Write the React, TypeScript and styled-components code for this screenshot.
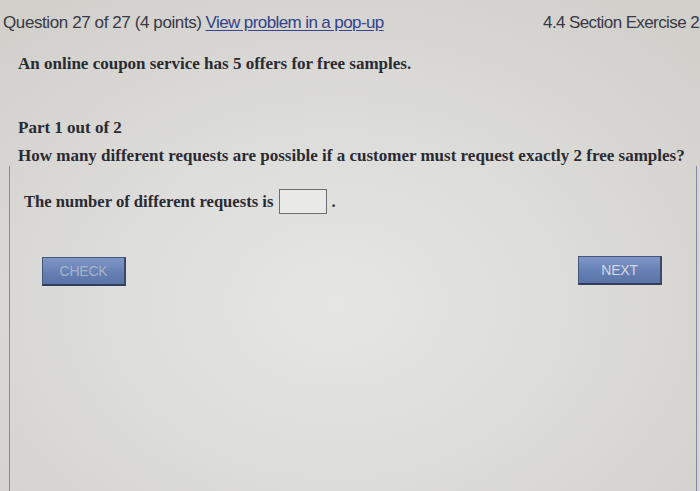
import React from "react";
import styled, { createGlobalStyle } from "styled-components";

const Global = createGlobalStyle`
  html, body { margin: 0; padding: 0; }
  body {
    width: 700px;
    height: 491px;
    overflow: hidden;
    background: radial-gradient(ellipse 70% 75% at 48% 62%, #e6e7e4 0%, #dddddb 45%, #d2d0cb 100%);
  }
`;

const Page = styled.div`
  width: 700px;
  height: 491px;
  overflow: hidden;
  display: flex;
  flex-direction: column;
`;

const Header = styled.div`
  display: flex;
  justify-content: space-between;
  align-items: baseline;
  padding: 13px 0 0 3px;
  font-family: "Liberation Sans", Arial, sans-serif;
  font-size: 17px;
  color: #383846;
  white-space: nowrap;
  letter-spacing: -0.4px;
`;

const Left = styled.div``;

const Link = styled.a`
  color: #34438a;
  text-decoration: underline;
  text-underline-offset: 2px;
  margin-left: 4px;
  letter-spacing: -0.6px;
`;

const Right = styled.div`
  margin-right: 1px;
  letter-spacing: -0.6px;
`;

const Serif = styled.div<{ $top?: number }>`
  font-family: "Liberation Serif", "Times New Roman", serif;
  font-weight: bold;
  font-size: 17px;
  color: #2a2a32;
  padding-left: 18px;
  margin-top: ${(p) => p.$top ?? 0}px;
  white-space: nowrap;
`;

const Frame = styled.div`
  flex: 1;
  display: flex;
  flex-direction: column;
  margin: 0 3px 0 9px;
  padding-top: 23px;
  border-left: 1px solid #7f8aa6;
  border-right: 1px solid #7f8aa6;
`;

const AnswerRow = styled.div`
  display: flex;
  align-items: center;
  font-family: "Liberation Serif", "Times New Roman", serif;
  font-weight: bold;
  font-size: 16.6px;
  color: #2a2a32;
  padding-left: 14px;
  gap: 6px;
`;

const Box = styled.span`
  display: inline-block;
  width: 46px;
  height: 23px;
  border: 1px solid #6e6e72;
  background: #e9e9e7;
`;

const Dot = styled.span`
  margin-left: -2px;
`;

const ButtonRow = styled.div`
  display: flex;
  justify-content: space-between;
  align-items: flex-start;
  padding: 42px 34px 0 32px;
`;

const Btn = styled.div<{ $dim?: boolean; $shift?: number }>`
  width: 84px;
  height: 29px;
  margin-top: ${(p) => p.$shift ?? 0}px;
  box-sizing: border-box;
  display: flex;
  align-items: center;
  justify-content: center;
  background: linear-gradient(#7f97c6, #6580b4 55%, #5b74a8);
  border: 1px solid #46557e;
  border-bottom: 2px solid #333d5c;
  border-right: 2px solid #3d4868;
  font-family: "Liberation Sans", Arial, sans-serif;
  font-size: 14px;
  color: ${(p) => (p.$dim ? "#a9b3c8" : "#d3d8e4")};
  letter-spacing: -0.2px;
`;

export default function App() {
  return (
    <Page>
      <Global />
      <Header>
        <Left>
          Question 27 of 27 (4 points)
          <Link>View problem in a pop-up</Link>
        </Left>
        <Right>4.4 Section Exercise 2</Right>
      </Header>
      <Serif $top={21}>An online coupon service has 5 offers for free samples.</Serif>
      <Serif $top={44}>Part 1 out of 2</Serif>
      <Serif $top={8}>How many different requests are possible if a customer must request exactly 2 free samples?</Serif>
      <Frame>
        <AnswerRow>
          The number of different requests is <Box />
          <Dot>.</Dot>
        </AnswerRow>
        <ButtonRow>
          <Btn $dim $shift={1}>CHECK</Btn>
          <Btn>NEXT</Btn>
        </ButtonRow>
      </Frame>
    </Page>
  );
}
